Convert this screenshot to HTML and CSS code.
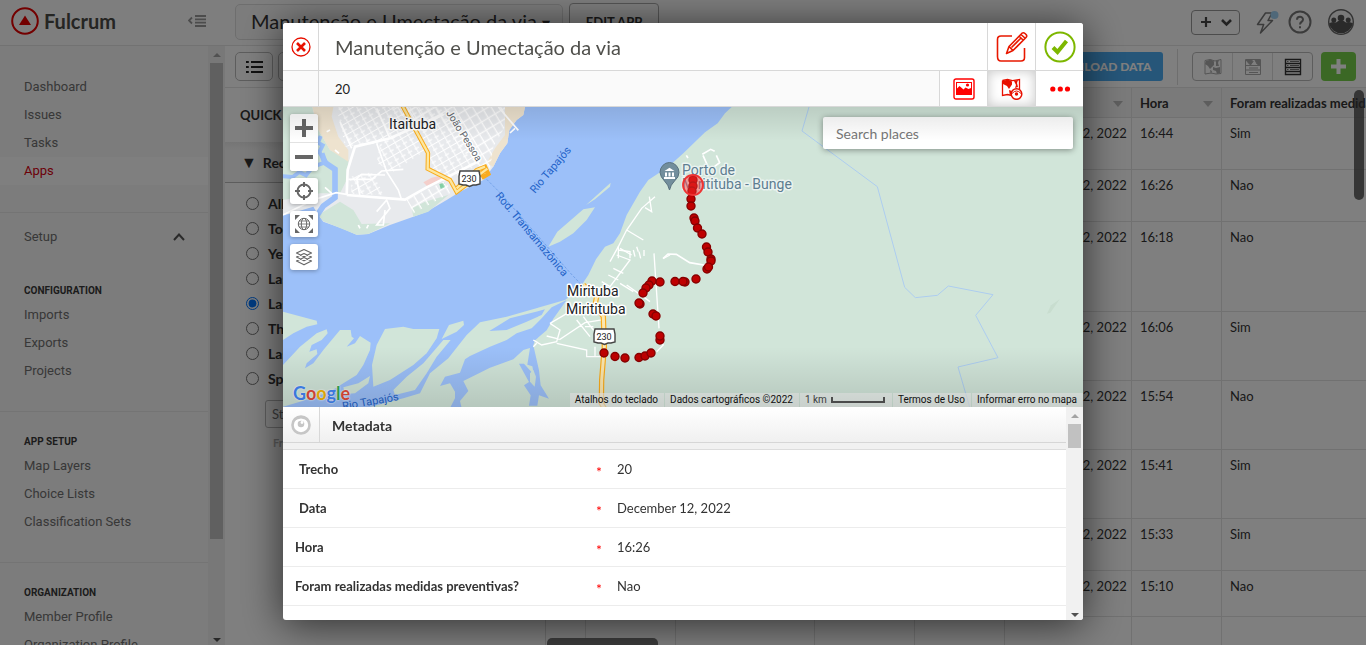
FILE: index.html
```html
<!DOCTYPE html>
<html lang="en">
<head>
<meta charset="utf-8">
<title>Fulcrum</title>
<link rel="stylesheet" href="styles.css">
</head>
<body>
<div class="app">
  <header class="topbar">
    <a class="brand" href="#"><svg width="28" height="28" viewBox="0 0 28 28"><circle cx="14" cy="14" r="12.8" fill="none" stroke="#e60000" stroke-width="2"/><path d="M14 8.500l6 9.500H8z" fill="#e60000"/></svg><span>Fulcrum</span></a>
    <button class="collapse" aria-label="Collapse menu"><svg width="19" height="12" viewBox="0 0 19 12" fill="none" stroke="#999" stroke-width="1.800"><path d="M4 2.500L1 5.500l3 3"/><path d="M7 1h11M7 4.300h11M7 7.700h11M7 11h11"/></svg></button>
    <button class="app-picker">Manutenção e Umectação da via <span class="caret">▾</span></button>
    <button class="edit-app">EDIT APP</button>
    <div class="top-actions">
      <button class="new-btn" aria-label="New"><svg width="34" height="14" viewBox="0 0 34 14" fill="none" stroke="#444" stroke-width="2.200"><path d="M7 2v10M2 7h10"/><path d="M23 5l4.500 4.500L32 5" stroke-width="2.600"/></svg></button>
      <button class="bare bolt" aria-label="Activity"><svg width="24" height="26" viewBox="0 0 24 26"><path d="M10.500 4h6.500l-4 7.500h4.500L5.500 24l3.200-8.500H2.500z" fill="none" stroke="#777" stroke-width="1.500" stroke-linejoin="round"/><circle cx="19.500" cy="6" r="4" fill="#9fd0f2"/></svg></button>
      <button class="bare help" aria-label="Help"><svg width="24" height="24" viewBox="0 0 24 24" fill="none" stroke="#777" stroke-width="2"><circle cx="12" cy="12" r="10.500"/><path d="M9 9.800c0-4 6-4 6-.3 0 2.500-3 2.300-3 5"/><path d="M12 16.200v2"/></svg></button>
      <button class="bare" aria-label="Account"><svg width="28" height="28" viewBox="0 0 28 28"><circle cx="14" cy="14" r="12.300" fill="#f2f2f2" stroke="#666" stroke-width="1.400"/><path d="M2 15.500q3-2.500 7-1 2-2 5-2t5 2q4-1.500 7 1A12.300 12.300 0 0 1 2 15.500z" fill="#555"/><g fill="#555"><circle cx="14" cy="10" r="3.300"/><circle cx="6.800" cy="12" r="2.500"/><circle cx="21.200" cy="12" r="2.500"/></g></svg></button>
    </div>
  </header>
  <div class="body">
    <aside class="sidebar">
      <nav class="menu">
        <ul class="group first"><li><a href="#">Dashboard</a></li><li><a href="#">Issues</a></li><li><a href="#">Tasks</a></li><li><a class="on" href="#">Apps</a></li></ul>
        <button class="setup">Setup <svg width="12" height="8" viewBox="0 0 12 8" fill="none" stroke="#555" stroke-width="2"><path d="M1 7l5-5.500L11 7"/></svg></button>
        <section class="block plain"><h2>CONFIGURATION</h2><ul><li><a href="#">Imports</a></li><li><a href="#">Exports</a></li><li><a href="#">Projects</a></li></ul></section>
        <section class="block"><h2>APP SETUP</h2><ul><li><a href="#">Map Layers</a></li><li><a href="#">Choice Lists</a></li><li><a href="#">Classification Sets</a></li></ul></section>
        <section class="block"><h2>ORGANIZATION</h2><ul><li><a href="#">Member Profile</a></li><li><a href="#">Organization Profile</a></li></ul></section>
      </nav>
      <div class="bar"><i class="up"></i><i class="thumb"></i><i class="down"></i></div>
    </aside>
    <main class="main">
      <div class="toolbar">
        <button class="tool" aria-label="List"><svg width="17" height="14" viewBox="0 0 17 14" stroke="#222" stroke-width="2.200" fill="none"><path d="M5 2h12M5 7h12M5 12h12M0 2h2.800M0 7h2.800M0 12h2.800"/></svg></button>
        <button class="tool" aria-label="Filter"></button>
        <button class="download">DOWNLOAD DATA</button>
        <div class="views">
          <button aria-label="Map view"><svg width="18" height="18" viewBox="0 0 18 18"><path d="M1 2.500l5-1 5 1.500 6-1.500v14l-5 .5-5-1-6 1z" fill="none" stroke="#aaa"/><path d="M2 3l5-1.500 3 2V7l-4 4-2-3-3-2zM12 3l3-1-1 3 1 3-3 0zM9 9l3 1 4-1v6l-3 1-1-3-3-1zM6 12l2 1-1 3z" fill="#aaa"/></svg></button>
          <button aria-label="Split view"><svg width="18" height="18" viewBox="0 0 18 18" fill="none" stroke="#aaa"><path d="M1.500 1.500h15v15h-15zM1.500 7.500h15M1.500 12h15M5 10h9M5 14.500h9"/><path d="M2 2l5-.5 2 2-2.500 3.500-2-2zM11 2l2 4 3 1V2z" fill="#aaa"/></svg></button>
          <button aria-label="Table view"><svg width="18" height="18" viewBox="0 0 18 18" fill="none" stroke="#333"><path d="M1.500 1.500h15v15h-15zM1.500 5.500h15M1.500 9.500h15M1.500 13.500h15" stroke-width="1.400"/><path d="M3 3.500h1.500M6 3.500h9M3 7.500h1.500M6 7.500h9M3 11.500h1.500M6 11.500h9" stroke-width=".7"/></svg></button>
        </div>
        <button class="add" aria-label="Add record"><svg width="17" height="17" viewBox="0 0 17 17" stroke="#fff" stroke-width="4"><path d="M8.500 1v15M1 8.500h15"/></svg></button>
      </div>
      <div class="content">
        <section class="filters">
          <h2>QUICK FILTERS</h2>
          <button class="fhead"><span class="tri">▼</span>Record Created</button>
          <div class="choices">
            <label><input type="radio" name="when">All</label>
            <label><input type="radio" name="when">Today</label>
            <label><input type="radio" name="when">Yesterday</label>
            <label><input type="radio" name="when">Last 7 Days</label>
            <label><input type="radio" name="when" checked>Last 30 Days</label>
            <label><input type="radio" name="when">This Month</label>
            <label><input type="radio" name="when">Last Month</label>
            <label><input type="radio" name="when">Specific Dates</label>
          </div>
          <input class="start" id="start" type="text" placeholder="Start Date">
          <label class="from" for="start">From</label>
        </section>
        <section class="records">
          <table>
            <colgroup><col class="w40"><col class="w90"><col class="w139"><col class="w100"><col class="w90"><col class="w127"><col class="w90"><col class="w260"></colgroup>
            <thead><tr><th></th><th></th><th></th><th></th><th></th><th>Data<i></i></th><th>Hora<i></i></th><th>Foram realizadas medidas preventivas?</th></tr></thead>
            <tbody>
              <tr class="h52"><td></td><td></td><td></td><td></td><td></td><td>December 12, 2022</td><td>16:44</td><td>Sim</td></tr>
              <tr class="h52"><td></td><td></td><td></td><td></td><td></td><td>December 12, 2022</td><td>16:26</td><td>Nao</td></tr>
              <tr class="h90"><td></td><td></td><td></td><td></td><td></td><td>December 12, 2022</td><td>16:18</td><td>Nao</td></tr>
              <tr class="h69"><td></td><td></td><td></td><td></td><td></td><td>December 12, 2022</td><td>16:06</td><td>Sim</td></tr>
              <tr class="h69"><td></td><td></td><td></td><td></td><td></td><td>December 12, 2022</td><td>15:54</td><td>Nao</td></tr>
              <tr class="h69"><td></td><td></td><td></td><td></td><td></td><td>December 12, 2022</td><td>15:41</td><td>Sim</td></tr>
              <tr class="h52"><td></td><td></td><td></td><td></td><td></td><td>December 12, 2022</td><td>15:33</td><td>Sim</td></tr>
              <tr class="h46"><td></td><td></td><td></td><td></td><td></td><td>December 12, 2022</td><td>15:10</td><td>Nao</td></tr>
              <tr class="h52"><td></td><td></td><td></td><td></td><td></td><td></td><td></td><td></td></tr>
            </tbody>
          </table>
          <i class="vbar"></i><i class="hbar"></i>
        </section>
      </div>
    </main>
  </div>
</div>

<div class="overlay">
<div class="modal" role="dialog" aria-label="Record">
  <div class="mhead">
    <button class="cell c35" aria-label="Close"><svg width="20" height="20" viewBox="0 0 20 20" fill="none" stroke="#e81000"><circle cx="10" cy="10" r="9" stroke-width="1.300"/><path d="M6 6l8 8M14 6l-8 8" stroke-width="2.600"/></svg></button>
    <h1>Manutenção e Umectação da via</h1>
    <button class="cell c47" aria-label="Edit"><svg width="32" height="32" viewBox="0 0 32 32" fill="none" stroke="#e81800" stroke-width="1.600" stroke-linejoin="round"><path d="M16 5H5q-3.500 0-3.500 3.500v17Q1.500 30 5 30h20q3.500 0 3.500-3.500V17"/><path d="M10.500 22.500l2.500-7L26 2.200q1.500-1 3 .3l1.300 1.300q1 1.500-.3 2.700L17 19.500zM23 5l4.500 4.500M25 3.500l4.500 4M13 15.500l4 4M15.500 16.500L24.500 7.500"/></svg></button>
    <button class="cell c47" aria-label="Save"><svg width="32" height="32" viewBox="0 0 32 32" fill="none" stroke="#7db700"><circle cx="16" cy="16" r="14.600" stroke-width="2"/><path d="M9 16.500l4.500 4.500L22.500 10" stroke-width="4"/></svg></button>
  </div>
  <div class="mhead sub">
    <span class="cell c35"></span>
    <h2>20</h2>
    <button class="cell c47" aria-label="Photos"><svg width="22" height="22" viewBox="0 0 22 22"><rect x="1" y="1" width="20" height="20" rx="2" fill="none" stroke="#f00" stroke-width="1.400"/><rect x="3.500" y="4.500" width="15" height="12" fill="none" stroke="#f00"/><path d="M3.500 11l3-3 4 3.500 2-2 3 1.500 2.500-1v6h-14.500z" fill="#f00"/><circle cx="14.500" cy="7" r="1.600" fill="#f00"/></svg></button>
    <button class="cell c47 active" aria-label="Map"><svg width="22" height="22" viewBox="0 0 22 22"><path d="M1.500 2.500l5-1 5 1.200 7-1.200v10M1.500 2.500v15l5-1 4.500 1" fill="none" stroke="#e81000" stroke-width="1.300"/><path d="M2 3l5-1.500 4 2v3L8 11l-2-3-4-2zM13 3l4-1-1 3 1 4-3 1 1-3zM8 12l3 1-2 5z" fill="#e81000"/><circle cx="15.500" cy="16" r="5.300" fill="#fff" stroke="#e81000" stroke-width="1.500"/><path d="M11 15.500q4.500-5 9 0" fill="none" stroke="#e81000"/><circle cx="15.500" cy="16" r="1.700" fill="#e81000"/></svg></button>
    <button class="cell c47" aria-label="More"><svg width="20" height="6" viewBox="0 0 20 6" fill="#f00"><circle cx="2.800" cy="3" r="2.600"/><circle cx="10.300" cy="3" r="2.600"/><circle cx="17.500" cy="3" r="2.600"/></svg></button>
  </div>

  <div class="map">
    <svg class="canvas" viewBox="0 0 800 300" preserveAspectRatio="xMinYMin slice">
      <defs>
        <pattern id="streets" width="23" height="31" patternUnits="userSpaceOnUse" patternTransform="rotate(-30)"><path d="M0 4h23M0 20h14M5 0v31" stroke="#fff" stroke-width="3" fill="none"/></pattern>
        <pattern id="blocks" width="24" height="28" patternUnits="userSpaceOnUse" patternTransform="rotate(-31)"><path d="M0 4h24M4 0v28" stroke="#fff" stroke-width="4" fill="none"/></pattern>
      </defs>
      <rect width="800" height="300" fill="#9cc0f9"/>
      <g transform="scale(.333333)">
        <path fill="#d1e5d9" d="M1346 0l-20 19-22 30-38 27-65 63-45 40-60 40-25 35-40 70-20 55-20 30-25 10-27 38-23 47-30 45-40 30-175 50-80 17-40 38-55 70-55 45-30 60-50 15-100 26H2400V0z"/>
        <g transform="translate(-9 -21)">
          <path fill="#e8eaed" d="M9 21H735L730 45 710 60 688 90 682 130 660 160 640 200 610 240 540 275 500 300 440 335 400 350 330 375 265 402 230 404 185 385 130 365 115 345 100 320 9 347z"/>
          <path fill="#d1e5d9" d="M9 21H97l13 59 40 70 55 30v50l-25 50h-60L9 300z"/>
          <path fill="#d1e5d9" d="M115 345l65-40 40 25 25 42 85-2-65 32-35 2-100-40zM395 325l40-20 70-20-60 50-45 15z"/>
          <path fill="#eee3cf" d="M97 21h63l-5 29 20 60 30 40v35l-55-35-35-60zM675 21h60l-5 24-20 15-22 30-6 40-22 30-20 40-20-10 25-45 30-40z"/>
          <path fill="#f4cfcb" d="M430 247l25-14 23-5 7 10-20 8-22 14z"/><path fill="#82cea5" d="M478 252l15-4 4 15-15 4z"/>
          <path fill="url(#streets)" d="M170 21H480L600 190 500 250 443 205 440 150 340 215 290 190 300 130 195 140zM210 230l70-15 30 70-95-3z"/>
          <path fill="url(#blocks)" d="M320 21H675L675 80 640 140 630 210 600 200 545 150 485 60 440 90zM380 300l120-60 10 40-110 60z"/>
          <path fill="none" stroke="#9cc0f9" stroke-width="12" d="M122 108l-8 20 14 8-10 20 20 30-40 15-20 25-20-10-20 15-40-3"/>
          <path fill="none" stroke="#9cc0f9" stroke-width="17" d="M125 160l10 28 30 20v85l-35 25-20 30-100 5"/>
          <g fill="none" stroke="#fff">
            <path stroke-width="8" d="M200 285l3-75 22-70 105-25 160-72M200 285l175 14 65-37 160-80"/>
            <path stroke-width="5" d="M9 345l90-45 70-22 30 5M135 262l20 18M205 238l70 0 30-25 65-5M240 290l-10-55 15-12 70 2M290 335l30-35 10 25-40 50h20l5-45M215 145l-35-80M330 115l-40-90M290 130l30 85 35 55 10 30M165 150l12 10M140 95l10-5M235 375l5 10M260 385l5-10M655 21l60 70"/>
          </g>
          <path fill="none" stroke="#f9ab1c" stroke-width="13" d="M366 15l78 144-1 47 67 34 20 36 92-70M530 265l60-55 25-10 10 22-20 12"/>
          <path fill="none" stroke="#fde79f" stroke-width="7" d="M366 15l78 144-1 47 67 34 20 36 92-70M530 265l60-55 25-10"/>
        </g>
        <g transform="translate(-9 429)" fill="#d1e5d9">
          <path d="M9 185l101 27 2 11-32 7-40 20-31 20zM9 345l51-55 50-40 30-12 3 12-18 20-30 15-7 20 22-7 2 14-32 28-5 15 25-15 30-40 50-60h32l3 20 7 5-22 25 25-10 15-22 32 20-2 22-20 45-20 30-40 25-40 25-90 30-51 15z"/>
          <path d="M315 237l55-7 30 7h78l-8 28-30 45-40 35-70 45-50 20-4-65 14-60zM485 267l22-42 43-13 2 13-22 20zM340 420l40-40 50-40 60-70h22l-42 50-30 50-35 50-60 15zM190 412l45-12 35-22-5 22-40 30-30 2z"/>
        </g>
        <g transform="translate(561 429)">
          <path fill="#9cc0f9" d="M290 150l-45 22-30 33-30 30-45 15-30 20-50 20-60 28-15 10-15 40-45 12-15 28 30-8 15 25v20l-15 29h35l-5-21 25-30-15-30 50-25 30-15 70-25 30-28 20-6-8 50 15 5 5 25-30-33h-15l30 55-15 10 20 30-5 31h25l5-31 30 10-25-40-5-45-17-75 5-15 35-30 20-35zM58 243l62-38 105-27-10 17-45 20-60 25z"/>
          <path fill="#d1e5d9" d="M180 370l10-10 8 20-4 30-14-15z"/>
          <g fill="none" stroke="#fff" stroke-width="4">
            <path d="M420 35l25-45M440 15l40 15-60 80-25-15M450-5l35 20M430 55l30 15M415 75l30 15M500-10l5 15M580 25l20-10M240 220l30 20-10 35-45 10-25-15M230 258l40 10 75-50 60-10M260 280l90 20v20h45M375 290v30M320 210l40 50M340 200l30 40M345 230h25M470 105l70 50M552 10l15 225M560 305l20-20-10-15M450 100l40 25M190 290l10-10M240 220l60-35 40-15"/>
            <path d="M555-160l-40 35-45 65-25 50v35M470-60l50 30M538-160l7 45-20-12M445 0l35 5v20M490 0l5 20M507 5l5 20M522 0v18"/>
          </g>
          <path fill="none" stroke="#f9ab1c" stroke-width="16" d="M340 105l40 35-5 25 25 35 3 90-8 100-1 70 18 30"/>
          <path fill="none" stroke="#fbe7b0" stroke-width="9" d="M340 105l40 35-5 25 25 35 3 90-8 100-1 70 18 30"/>
          <path fill="none" stroke="#5f93df" stroke-width="2" stroke-dasharray="8 5" d="M50-212l40 40 210 240 35 37"/>
        </g>
        <path fill="#d1e5d9" d="M796 419l27-45 78-67 35-6-25 38-40 40-40 25zM909 294l74-67-2 12-45 38z"/>
        <path fill="none" stroke="#fff" stroke-width="5" d="M1260 145l20 45M1258 142l25-15 12 6M1300 145l10 22-20 15M1210 145l5 8M1140 455l15-14 25 1 40 25 60 10M681 78l15-14"/>
        <path fill="none" stroke="#adcdf0" stroke-width="3" d="M1578 0l-21 72 226 167 82 302 32 31 66-7 33-28 134 26-52 62 67 127-120 28 35 120"/>
        <path d="M2292 620l12-25 26-18-28 40z" fill="#c8ddcf"/>
      </g>
      <g class="water-name"><text transform="translate(252 87) rotate(-50)">Rio Tapajós</text><text transform="translate(212 89) rotate(50)">Rod. Transamazônica</text><text transform="translate(60 303) rotate(-10)">Rio Tapajós</text></g>
      <text class="street" transform="translate(163 6) rotate(58)">João Pessoa</text>
      <g class="town"><text x="106" y="22">Itaituba</text><text x="284" y="189">Mirituba</text><text x="283" y="207">Miritituba</text></g>
      <g class="shield"><path d="M177 64h19l1 5v8l-4 1h-3l-3.500 1.500L183 78h-3l-4-1v-8z"/><path d="M312 222h19l1 5v8l-4 1h-3l-3.500 1.500L318 236h-3l-4-1v-8z"/><text x="186" y="75">230</text><text x="321" y="233">230</text></g>
      <path d="M386.500 83q-1-5-5-9-4-4-4.500-8.500a9.500 10 0 0 1 19 0q0 4.500-4.500 8.500-4 4-5 9z" fill="#728e9c" stroke="#59717e"/><path d="M381.500 64l5-3.300 5 3.300zM382 65.500h2v4h-2zM385.500 65.500h2v4h-2zM389 65.500h2v4h-2zM381 70h11v2h-11z" fill="#fff"/>
      <g class="poi"><text x="399" y="68">Porto de</text><text x="399" y="82">Miritituba - Bunge</text></g>
      <g class="dots">
        <circle cx="410" cy="73" r="4"/><circle cx="410" cy="79" r="4"/><circle cx="409" cy="84" r="4"/><circle cx="408" cy="92" r="4"/><circle cx="408" cy="99" r="4"/><circle cx="411" cy="111" r="4"/><circle cx="412" cy="114" r="4"/><circle cx="414.500" cy="121" r="4"/><circle cx="419" cy="127" r="4"/><circle cx="423.500" cy="140" r="4"/><circle cx="425" cy="145" r="4"/><circle cx="428" cy="152" r="4"/><circle cx="428" cy="154" r="4"/><circle cx="424" cy="162" r="4"/><circle cx="425.500" cy="160" r="4"/><circle cx="413" cy="172" r="4"/><circle cx="402" cy="175" r="4"/><circle cx="400" cy="174.500" r="4"/><circle cx="392" cy="174.500" r="4"/><circle cx="377" cy="175" r="4"/><circle cx="369" cy="174" r="4"/><circle cx="366" cy="178" r="4"/><circle cx="363" cy="181" r="4"/><circle cx="360" cy="186" r="4"/><circle cx="357" cy="197" r="4"/><circle cx="356" cy="196" r="4"/><circle cx="370" cy="207" r="4"/><circle cx="373" cy="209" r="4"/><circle cx="377" cy="233" r="4"/><circle cx="377" cy="229" r="4"/><circle cx="321" cy="246" r="4"/><circle cx="332" cy="249.500" r="4"/><circle cx="342" cy="251" r="4"/><circle cx="356" cy="250.500" r="4"/><circle cx="362" cy="249" r="4"/><circle cx="368" cy="246" r="4"/>
      </g>
      <circle cx="410" cy="78" r="10" fill="#f33" fill-opacity=".45" stroke="#e33" stroke-width="1.800"/>
    </svg>
    <div class="controls">
      <div class="zoom"><button aria-label="Zoom in"><svg width="18" height="18" viewBox="0 0 18 18" stroke="#666" stroke-width="4"><path d="M9 0v18M0 9h18"/></svg></button><button aria-label="Zoom out"><svg width="18" height="4" viewBox="0 0 18 4"><path d="M0 0h18v4H0z" fill="#666"/></svg></button></div>
      <button aria-label="My location"><svg width="18" height="18" viewBox="0 0 18 18" fill="none" stroke="#666"><circle cx="9" cy="9" r="6.500" stroke-width="2"/><path d="M9 0v5M9 13v5M0 9h5M13 9h5" stroke-width="2"/></svg></button>
      <button aria-label="Full extent"><svg width="18" height="18" viewBox="0 0 18 18" fill="none" stroke="#666"><circle cx="9" cy="9" r="5.700"/><ellipse cx="9" cy="9" rx="2.700" ry="5.700"/><path d="M3 9h12M4 6h10M4 12h10" stroke-width=".8"/><path d="M0 0h5L0 5zM18 0h-5l5 5zM0 18h5l-5-5zM18 18h-5l5-5z" fill="#666" stroke="none"/></svg></button>
      <button aria-label="Layers"><svg width="18" height="18" viewBox="0 0 18 18" fill="#fff" stroke="#666" stroke-width="1.200" stroke-linejoin="round"><path d="M1.500 13L9 9.500l7.500 3.500L9 16.800zM1.500 9L9 5.500 16.500 9 9 12.800zM1.500 5L9 1.500 16.500 5 9 8.800z"/></svg></button>
    </div>
    <input class="search" type="text" placeholder="Search places" aria-label="Search places">
    <div class="google"><span class="b">G</span><span class="r">o</span><span class="y">o</span><span class="b">g</span><span class="g">l</span><span class="r">e</span></div>
    <div class="credits"><button>Atalhos do teclado</button><span>Dados cartográficos ©2022</span><button class="scale">1 km <i></i></button><a href="#">Termos de Uso</a><a href="#">Informar erro no mapa</a></div>
    <div class="shade"></div>
  </div>

  <div class="form">
    <div class="fields">
      <div class="section"><span class="eye"><svg width="20" height="20" viewBox="0 0 20 20"><circle cx="10" cy="10" r="8.500" fill="#fff" stroke="#c6c6c6" stroke-width="2.600"/><path d="M2 7q8-7 16 0l-2-4-5-2-6 2z" fill="#c6c6c6"/><circle cx="10" cy="9" r="3.300" fill="#c6c6c6"/><circle cx="11" cy="7.500" r="1.400" fill="#fff"/></svg></span><h3>Metadata</h3></div>
      <dl>
        <div class="row in"><dt>Trecho</dt><dd class="req">*</dd><dd>20</dd></div>
        <div class="row in"><dt>Data</dt><dd class="req">*</dd><dd>December 12, 2022</dd></div>
        <div class="row"><dt>Hora</dt><dd class="req">*</dd><dd>16:26</dd></div>
        <div class="row"><dt>Foram realizadas medidas preventivas?</dt><dd class="req">*</dd><dd>Nao</dd></div>
      </dl>
    </div>
    <div class="bar form-bar"><i class="up"></i><i class="thumb"></i><i class="down"></i></div>
  </div>
</div>
</div>
</body>
</html>
```

FILE: styles.css
```css
* { box-sizing: border-box; }
html, body { margin: 0; height: 100%; overflow: hidden; }
body { font: 13px/18px Lato, "Open Sans", sans-serif; color: #333; background: #fff; }
button { font: inherit; color: inherit; background: none; border: 0; padding: 0; margin: 0; }
a { color: inherit; text-decoration: none; }
ul, dl, dd, h1, h2, h3 { margin: 0; padding: 0; list-style: none; }
svg { display: block; flex: none; }
i { display: block; }

.app { height: 100%; display: flex; flex-direction: column; }
.topbar { height: 46px; flex: none; display: flex; align-items: flex-start; border-bottom: 1px solid #e4e4e4; background: #fdfdfd; }
.brand { display: flex; align-items: center; gap: 5px; width: 188px; padding: 7px 0 0 11px; flex: none; }
.brand span { font-size: 20px; line-height: 28px; font-weight: 700; color: #4a4a46; }
.collapse { width: 19px; margin-top: 15px; }
.app-picker { margin: 4px 6px 0 28px; height: 36px; padding: 0 15px; border: 1px solid #ddd; border-radius: 5px; background: #f8f8f8; font-size: 20px; width: 328px; text-align: left; white-space: nowrap; }
.caret { font-size: 16px; }
.edit-app { margin-top: 3px; height: 37px; width: 90px; border: 1px solid #aaa; border-radius: 4px; font-size: 13px; font-weight: 700; }
.top-actions { margin-left: auto; padding: 8px 11px 0 0; display: flex; align-items: center; }
.new-btn { width: 49px; height: 25px; border: 1px solid #999; border-radius: 4px; display: grid; place-items: center; }
.bolt { margin-left: 15px; }
.help { margin: 0 15px 0 9px; }

.body { flex: 1; min-height: 0; display: flex; }
.sidebar { width: 225px; flex: none; display: flex; overflow: hidden; background: #f8f8f8; font: 13px/28px Roboto, sans-serif; color: #707070; }
.menu { flex: 1; height: 100%; overflow: hidden; }
.menu li a { display: block; height: 28px; padding-left: 24px; }
.menu li a.on { background: #fff; color: #d80010; }
.group.first { padding: 27px 0; border-bottom: 1px solid #e9e9e9; }
.setup { display: flex; align-items: center; justify-content: space-between; width: 100%; height: 48px; padding: 0 23px 0 24px; }
.block { padding: 23px 0 26px; border-top: 1px solid #e9e9e9; }
.block.plain { border-color: transparent; padding-top: 22px; }
.block h2 { font-size: 10px; line-height: 14px; font-weight: 700; color: #383838; padding-left: 24px; margin-bottom: 3px; }
.bar { width: 17px; flex: none; background: #f1f1f1; display: flex; flex-direction: column; align-items: center; padding: 7px 0 3px; }
.bar .up { border: 4px solid transparent; border-top: 0; border-bottom: 4px solid #a3a3a3; }
.bar .down { border: 4px solid transparent; border-bottom: 0; border-top: 4px solid #505050; margin-top: auto; }
.bar .thumb { width: 13px; height: 476px; margin-top: 6px; background: #c1c1c1; }

.main { flex: 1; min-width: 0; display: flex; flex-direction: column; }
.toolbar { height: 42px; flex: none; display: flex; align-items: center; padding: 0 10px; gap: 5px; border-bottom: 1px solid #e4e4e4; }
.tool { width: 38px; height: 29px; border: 1px solid #bbb; border-radius: 5px; display: grid; place-items: center; }
.download { margin-left: auto; height: 29px; width: 131px; border-radius: 3px; background: #4cacf2; color: #fff; font-size: 12px; font-weight: 900; }
.views { display: flex; margin: 0 3px 0 24px; border: 1px solid #bbb; border-radius: 4px; height: 29px; position: relative; }
.views::before { content: ""; position: absolute; left: -16px; top: -4px; height: 36px; border-left: 1px solid #ddd; }
.views button { width: 40px; display: grid; place-items: center; border-right: 1px solid #ddd; }
.views button:last-child { border: 0; width: 39px; }
.add { width: 35px; height: 29px; border-radius: 4px; background: #76d04a; display: grid; place-items: center; }
.content { flex: 1; min-height: 0; display: flex; }
.filters { width: 320px; flex: none; display: flex; flex-direction: column; align-items: flex-start; }
.filters h2 { width: 100%; font-size: 13px; line-height: 54px; padding-left: 15px; }
.fhead { width: 100%; height: 41px; flex: none; padding-left: 16px; text-align: left; font-size: 14px; font-weight: 700; border-bottom: 1px solid #bbb; background: linear-gradient(#ebebeb, #f8f8f8 8px); }
.tri { margin-right: 6px; font-size: 16px; }
.choices { padding: 8px 0 0 21px; }
.choices label { display: flex; align-items: center; gap: 9px; height: 25px; font-weight: 700; font-size: 14px; }
.choices input { width: 13px; height: 13px; margin: 0; }
.start { width: 240px; height: 28px; margin: 9px 0 6px 40px; padding: 0 6px; border: 1px solid #bbb; border-radius: 3px; font: inherit; }
.from { padding-left: 48px; font-size: 11px; font-weight: 700; color: #b5b5b5; }

.records { flex: 1; min-width: 0; overflow: hidden; position: relative; border-left: 1px solid #ddd; }
table { border-collapse: separate; border-spacing: 0; table-layout: fixed; width: 936px; }
.w40 { width: 40px; } .w90 { width: 90px; } .w100 { width: 100px; } .w127 { width: 127px; } .w139 { width: 139px; } .w260 { width: 260px; }
th, td { border-right: 1px solid #e2e2e2; border-bottom: 1px solid #e2e2e2; text-align: left; vertical-align: top; padding: 6px 0 0 8px; white-space: nowrap; }
th { height: 30px; background: #f4f4f4; }
th i { float: right; margin: 7px 8px 0 0; border: 5px solid transparent; border-bottom: 0; border-top: 6px solid #bbb; }
.h46 { height: 46px; } .h52 { height: 52px; } .h69 { height: 69px; } .h90 { height: 90px; }
.vbar { position: absolute; right: 2px; top: 2px; width: 10px; height: 110px; border-radius: 5px; background: rgba(60, 60, 60, .75); }
.hbar { position: absolute; left: 1px; bottom: -4px; width: 111px; height: 11px; border-radius: 5px; background: #777; }

.overlay { position: fixed; inset: 0; padding: 23px 0 25px; display: flex; justify-content: center; background: rgba(0, 0, 0, .5); }
.modal { width: 800px; max-width: 100%; height: 100%; display: flex; flex-direction: column; background: #fff; border-radius: 3px; overflow: hidden; box-shadow: 0 4px 40px rgba(0, 0, 0, .65); }
.mhead { display: flex; flex: none; height: 48px; border-bottom: 1px solid #d8d8d8; }
.mhead.sub { height: 36px; background: #fafafa; }
.cell { display: grid; place-items: center; flex: none; background: #fff; }
.c35 { width: 36px; border-right: 1px solid #d8d8d8; }
.sub .c35 { background: #fafafa; }
.c47 { width: 48px; border-left: 1px solid #d8d8d8; }
.active { box-shadow: inset 0 0 12px rgba(0, 0, 0, .22); }
.mhead h1 { flex: 1; padding-left: 16px; font-size: 20px; line-height: 49px; font-weight: 400; color: #50504c; }
.mhead h2 { flex: 1; padding-left: 16px; font-size: 13px; line-height: 36px; font-weight: 400; color: #222; }

.map { position: relative; height: 300px; flex: none; overflow: hidden; font-family: Roboto, sans-serif; }
.canvas { width: 100%; height: 300px; }
.canvas text { font-family: Roboto, sans-serif; paint-order: stroke; stroke-linejoin: round; }
.town text { font-size: 14px; fill: #202124; stroke: #fff; stroke-width: 3px; }
.water-name text { font-size: 11px; fill: #2262c8; }
.canvas .street { font-size: 10px; fill: #60656b; stroke: #fff; stroke-width: 3px; }
.poi text { font-size: 14px; fill: #5e7d90; stroke: #eaf3f0; stroke-width: 3px; }
.shield path { fill: #fff; stroke: #444; stroke-width: 1.4px; }
.shield text { font-size: 9px; text-anchor: middle; fill: #222; }
.dots circle { fill: #bf0000; stroke: #870000; stroke-width: 1.4px; }
.controls { position: absolute; left: 7px; top: 7px; display: flex; flex-direction: column; gap: 7px; }
.controls button { width: 28px; height: 26px; background: #fff; border-radius: 3px; display: grid; place-items: center; box-shadow: 0 1px 4px rgba(0, 0, 0, .3); }
.zoom { background: #fff; border-radius: 3px; box-shadow: 0 1px 4px rgba(0, 0, 0, .3); }
.controls .zoom button { height: 28px; box-shadow: none; }
.controls .zoom button + button { height: 29px; border-top: 1px solid #e2e2e2; border-radius: 0 0 3px 3px; }
.search { position: absolute; right: 10px; top: 10px; width: 250px; height: 32px; border: 0; border-radius: 2px; padding: 1px 13px; font: 14px Lato, sans-serif; background: #fff; box-shadow: 0 1px 6px rgba(0, 0, 0, .4); }
.search::placeholder { color: #777; }
.google { position: absolute; left: 10px; bottom: 2px; font: 700 18px/24px Lato, sans-serif; text-shadow: 0 0 1px #fff, 0 0 2px #fff; }
.b { color: #4285f4; } .r { color: #e04a3b; } .y { color: #f2b50a; } .g { color: #34a853; }
.credits { position: absolute; right: 0; bottom: 0; height: 14px; display: flex; gap: 1px; font-size: 10px; line-height: 14px; color: #111; }
.credits > * { background: rgba(245, 245, 245, .6); padding: 0 6px 0 5px; white-space: nowrap; }
.credits .scale { display: flex; align-items: center; gap: 4px; padding-right: 7px; color: #444; }
.scale i { width: 54px; height: 6px; border: 2px solid #555; border-top: 0; }
.shade { position: absolute; inset: 0; pointer-events: none; background: linear-gradient(rgba(0, 0, 0, .1), transparent 34px, transparent 240px, rgba(0, 0, 0, .13)); }

.form { flex: 1; min-height: 0; display: flex; }
.fields { flex: 1; overflow: hidden; }
.section { display: flex; height: 36px; background: linear-gradient(#fff, #f0f0f0); border-bottom: 1px solid #d6d6d6; }
.eye { width: 37px; padding: 8px 0 0 8px; border-right: 1px solid #d8d8d8; }
.section h3 { padding-left: 12px; font-size: 14px; line-height: 38px; }
.fields dl { border-top: 1px solid #dcdcdc; box-shadow: 0 -6px #f1f1f1; margin-top: 6px; }
.row { display: flex; height: 39px; align-items: center; border-bottom: 1px solid #ececec; padding-left: 12px; }
.row dt { width: 300px; font-weight: 700; }
.row.in dt { padding-left: 4px; }
.req { width: 22px; color: #f00; font-size: 14px; padding: 5px 0 0 1px; }
.form-bar .thumb { height: 24px; }
```
